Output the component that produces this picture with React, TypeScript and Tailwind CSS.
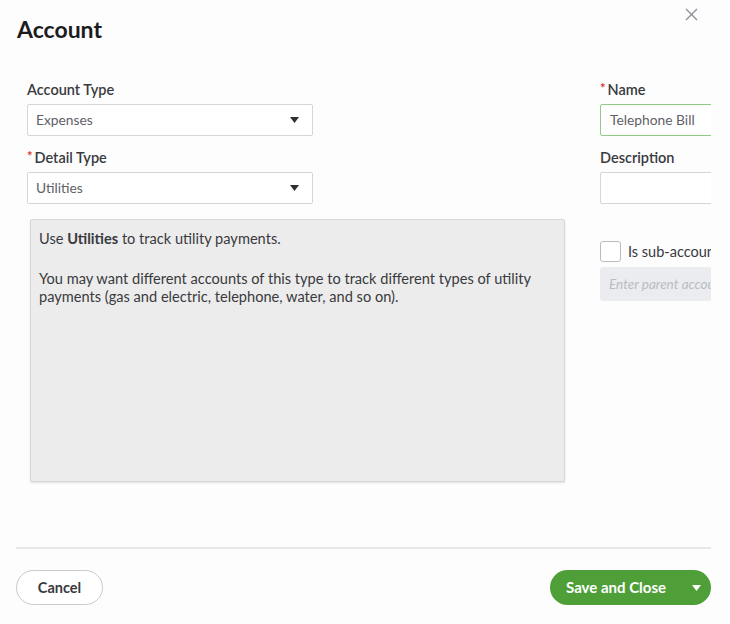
import React from "react";

function Caret({ className = "" }: { className?: string }) {
  return (
    <svg width="9" height="6" viewBox="0 0 9 6" className={className}>
      <path d="M0 0h9L4.5 6z" fill="currentColor" />
    </svg>
  );
}

function Label({ children, required }: { children: React.ReactNode; required?: boolean }) {
  return (
    <div className="flex items-start text-[14.5px] font-semibold leading-5 text-[#393a3d]">
      {required && <span className="mr-[2px] text-[13px] leading-4 text-[#d52b1e]">*</span>}
      {children}
    </div>
  );
}

function Select({ value }: { value: string }) {
  return (
    <div className="mt-[4px] flex h-[32px] w-[286px] items-center justify-between rounded-[2px] border border-[#d4d6da] bg-white pl-[8px] pr-[13px] text-[13.8px] text-[#5f6166]">
      <span>{value}</span>
      <Caret className="text-[#2e2f33]" />
    </div>
  );
}

export default function App() {
  return (
    <div className="h-[624px] w-[730px] bg-[#fdfdfd] font-['Lato',sans-serif]">
      <div className="w-[711px] overflow-hidden pl-[16px]">
        <div className="flex items-start justify-between">
          <h1 className="ml-[1px] mt-[15px] text-[23px] font-bold leading-7 text-[#1b1c1e]">Account</h1>
          <button className="mr-[13px] mt-[8px] text-[#8d9096]">
            <svg width="13" height="13" viewBox="0 0 13 13">
              <path d="M1 1l11 11M12 1L1 12" stroke="currentColor" strokeWidth="1.4" />
            </svg>
          </button>
        </div>

        <div className="mt-[37px] flex gap-[35px] pl-[11px]">
          <div className="w-[538px] shrink-0">
            <Label>Account Type</Label>
            <Select value="Expenses" />
            <div className="mt-[12px]">
              <Label required>Detail Type</Label>
            </div>
            <Select value="Utilities" />
            <div className="ml-[3px] mt-[15px] h-[263px] rounded-[2px] border border-[#d6d7d9] bg-[#ececec] px-[8px] py-[10px] text-[14.6px] leading-[18px] text-[#393a3d] shadow-[0_1px_2px_rgba(0,0,0,0.12)]">
              <p>
                Use <b className="font-bold">Utilities</b> to track utility payments.
              </p>
              <p className="mt-[22px]">
                You may want different accounts of this type to track different types of utility payments (gas and
                electric, telephone, water, and so on).
              </p>
            </div>
          </div>

          <div className="w-[200px] shrink-0">
            <Label required>Name</Label>
            <div className="mt-[4px] flex h-[32px] items-center rounded-[2px] border border-[#8fcd85] bg-white pl-[9px] text-[13.8px] text-[#5f6166]">
              Telephone Bill
            </div>
            <div className="mt-[12px]">
              <Label>Description</Label>
            </div>
            <div className="mt-[4px] h-[32px] rounded-[2px] border border-[#d4d6da] bg-white" />
            <label className="mt-[37px] flex items-center gap-[7px] text-[14.5px] text-[#393a3d]">
              <span className="h-[21px] w-[21px] rounded-[3px] border border-[#b9bcc1] bg-white" />
              Is sub-account
            </label>
            <div className="mt-[4px] flex h-[34px] items-center rounded-[3px] bg-[#eaecef] pl-[9px] text-[13.5px] italic text-[#b9bcc2]">
              Enter parent account
            </div>
          </div>
        </div>

        <div className="mt-[65px] h-[2px] bg-[#e8e8e8]" />

        <div className="mt-[21px] flex items-center justify-between">
          <button className="h-[35px] w-[87px] rounded-full border border-[#c9cacd] bg-white text-[14.5px] font-bold text-[#393a3d]">
            Cancel
          </button>
          <button className="flex h-[35px] w-[161px] items-center rounded-full bg-[#4e9f38] pl-[16px] pr-[10px] text-[15px] font-bold text-white">
            <span>Save and Close</span>
            <Caret className="ml-auto text-white" />
          </button>
        </div>
      </div>
    </div>
  );
}
